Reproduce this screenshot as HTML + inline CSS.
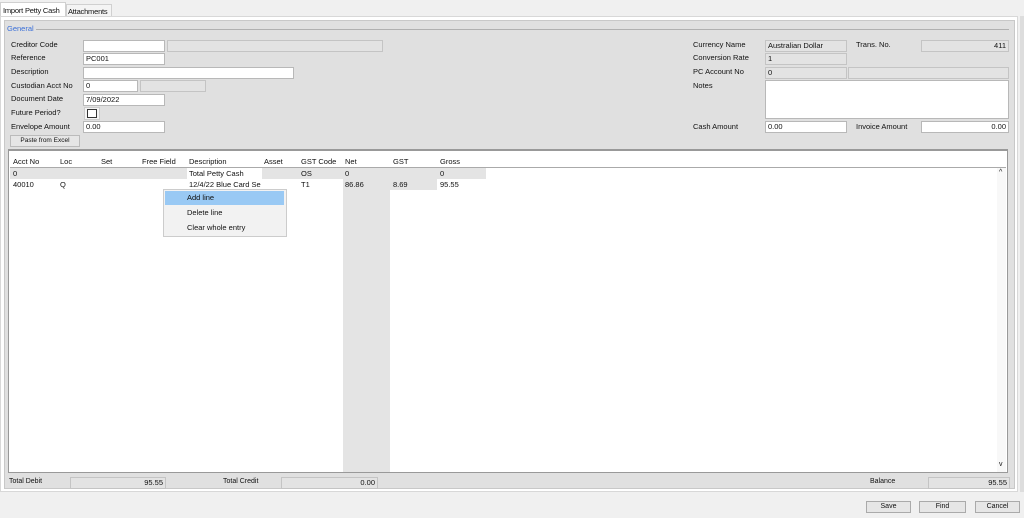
<!DOCTYPE html>
<html><head><style>
*{box-sizing:border-box;margin:0;padding:0}
body{width:1024px;height:518px;background:#f0f0f0;font-family:"Liberation Sans",sans-serif;font-size:8px;color:#111;position:relative;overflow:hidden;white-space:nowrap}
.a{position:absolute}
.in{position:absolute;background:#fff;border:1px solid #b8b8b8;height:12px;padding:0 2px;font-size:7.5px;line-height:10px}
.ro{background:#e3e3e3;border-color:#c4c4c4}
.r{text-align:right}
.l{position:absolute;font-size:7.5px}
</style></head><body>
<div class="a" style="left:0;top:2px;width:66px;height:15px;background:#fff;border:1px solid #d0d0d0;border-bottom:none;font-size:7.5px;padding:3px 2px;letter-spacing:-0.2px">Import Petty Cash</div>
<div class="a" style="left:66px;top:4px;width:46px;height:12px;background:#f4f4f4;border:1px solid #d0d0d0;border-bottom:none;font-size:7.5px;padding:2px 1px;letter-spacing:-0.2px">Attachments</div>
<div class="a" style="left:0;top:16px;width:1018px;height:476px;background:#fff;border:1px solid #d8d8d8"></div>
<div class="a" style="left:4px;top:20px;width:1011px;height:469px;background:#e0e0e0;border:1px solid #c8c8c8"></div>
<div class="a" style="left:35px;top:29px;width:974px;height:1px;background:#b0b0b0"></div>
<div class="l" style="left:7px;top:24px;color:#3a6fd8;background:#e0e0e0;padding-right:2px">General</div>
<div class="l" style="left:11px;top:40px">Creditor Code</div>
<div class="in" style="left:83px;top:40px;width:82px"></div>
<div class="in ro" style="left:167px;top:40px;width:216px"></div>
<div class="l" style="left:11px;top:53px">Reference</div>
<div class="in" style="left:83px;top:53px;width:82px">PC001</div>
<div class="l" style="left:11px;top:67px">Description</div>
<div class="in" style="left:83px;top:67px;width:211px"></div>
<div class="l" style="left:11px;top:81px">Custodian Acct No</div>
<div class="in" style="left:83px;top:80px;width:55px">0</div>
<div class="in ro" style="left:140px;top:80px;width:66px"></div>
<div class="l" style="left:11px;top:94px">Document Date</div>
<div class="in" style="left:83px;top:94px;width:82px">7/09/2022</div>
<div class="l" style="left:11px;top:108px">Future Period?</div>
<div class="a" style="left:84px;top:107px;width:16px;height:13px;background:#f4f4f4;border:1px solid #ccc"></div>
<div class="a" style="left:87px;top:109px;width:10px;height:9px;background:#fff;border:1px solid #333"></div>
<div class="l" style="left:11px;top:122px">Envelope Amount</div>
<div class="in" style="left:83px;top:121px;width:82px">0.00</div>
<div class="a" style="left:10px;top:135px;width:70px;height:12px;background:#e6e6e6;border:1px solid #bbb;font-size:6.5px;text-align:center;line-height:10px">Paste from Excel</div>

<div class="l" style="left:693px;top:40px">Currency Name</div>
<div class="in ro" style="left:765px;top:40px;width:82px">Australian Dollar</div>
<div class="l" style="left:856px;top:40px">Trans. No.</div>
<div class="in ro r" style="left:921px;top:40px;width:88px">411</div>
<div class="l" style="left:693px;top:53px">Conversion Rate</div>
<div class="in ro" style="left:765px;top:53px;width:82px">1</div>
<div class="l" style="left:693px;top:67px">PC Account No</div>
<div class="in ro" style="left:765px;top:67px;width:82px">0</div>
<div class="in ro" style="left:848px;top:67px;width:161px"></div>
<div class="l" style="left:693px;top:81px">Notes</div>
<div class="in" style="left:765px;top:80px;width:244px;height:39px"></div>
<div class="l" style="left:693px;top:122px">Cash Amount</div>
<div class="in" style="left:765px;top:121px;width:82px">0.00</div>
<div class="l" style="left:856px;top:122px">Invoice Amount</div>
<div class="in r" style="left:921px;top:121px;width:88px">0.00</div>

<div class="a" style="left:8px;top:149px;width:1000px;height:324px;background:#fff;border:1px solid #999;border-top:2px solid #999"></div>
<div class="a" style="left:10px;top:167px;width:996px;height:1px;background:#aaa"></div>
<div class="a" style="left:10px;top:168px;width:476px;height:11px;background:#e4e4e4"></div>
<div class="a" style="left:187px;top:168px;width:75px;height:11px;background:#fff"></div>
<div class="a" style="left:343px;top:179px;width:47px;height:293px;background:#e4e4e4"></div>
<div class="a" style="left:390px;top:179px;width:47px;height:11px;background:#e4e4e4"></div>
<div class="a" style="left:997px;top:168px;width:9px;height:304px;background:#f8f8f8"></div>
<div class="l" style="left:999px;top:169px;font-size:7px">^</div>
<div class="l" style="left:999px;top:461px;font-size:7px">v</div>
<div class="l" style="left:13px;top:157px">Acct No</div><div class="l" style="left:60px;top:157px">Loc</div><div class="l" style="left:101px;top:157px">Set</div><div class="l" style="left:142px;top:157px">Free Field</div><div class="l" style="left:189px;top:157px">Description</div><div class="l" style="left:264px;top:157px">Asset</div><div class="l" style="left:301px;top:157px">GST Code</div><div class="l" style="left:345px;top:157px">Net</div><div class="l" style="left:393px;top:157px">GST</div><div class="l" style="left:440px;top:157px">Gross</div>
<div class="l" style="left:13px;top:169px">0</div><div class="l" style="left:189px;top:169px">Total Petty Cash</div><div class="l" style="left:301px;top:169px">OS</div><div class="l" style="left:345px;top:169px">0</div><div class="l" style="left:440px;top:169px">0</div>
<div class="l" style="left:13px;top:180px">40010</div><div class="l" style="left:60px;top:180px">Q</div><div class="l" style="left:189px;top:180px">12/4/22 Blue Card Se</div><div class="l" style="left:301px;top:180px">T1</div><div class="l" style="left:345px;top:180px">86.86</div><div class="l" style="left:393px;top:180px">8.69</div><div class="l" style="left:440px;top:180px">95.55</div>

<div class="a" style="left:163px;top:189px;width:124px;height:48px;background:#f2f2f2;border:1px solid #ccc"></div>
<div class="a" style="left:165px;top:191px;width:119px;height:14px;background:#99c9f4"></div>
<div class="l" style="left:187px;top:193px">Add line</div>
<div class="l" style="left:187px;top:208px">Delete line</div>
<div class="l" style="left:187px;top:223px">Clear whole entry</div>

<div class="l" style="left:9px;top:478px;font-size:7px">Total Debit</div>
<div class="in ro r" style="left:70px;top:477px;width:96px">95.55</div>
<div class="l" style="left:223px;top:478px;font-size:7px">Total Credit</div>
<div class="in ro r" style="left:281px;top:477px;width:97px">0.00</div>
<div class="l" style="left:870px;top:478px;font-size:7px">Balance</div>
<div class="in ro r" style="left:928px;top:477px;width:82px">95.55</div>

<div class="a" style="left:866px;top:501px;width:45px;height:12px;background:#e6e6e6;border:1px solid #aaa;font-size:7px;text-align:center;line-height:10px">Save</div>
<div class="a" style="left:919px;top:501px;width:47px;height:12px;background:#e6e6e6;border:1px solid #aaa;font-size:7px;text-align:center;line-height:10px">Find</div>
<div class="a" style="left:975px;top:501px;width:45px;height:12px;background:#e6e6e6;border:1px solid #aaa;font-size:7px;text-align:center;line-height:10px">Cancel</div>
<div class="a" style="left:1020px;top:16px;width:4px;height:476px;background:#ddd"></div>
</body></html>
